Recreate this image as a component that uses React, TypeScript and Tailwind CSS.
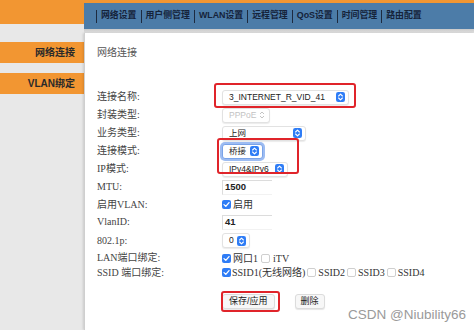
import React from "react";

const sans = { fontFamily: '"Liberation Sans", "Noto Sans CJK SC", sans-serif' };
const serif = { fontFamily: '"Liberation Serif", "Noto Sans CJK SC", serif' };

function Stepper({ gray = false }: { gray?: boolean }) {
  if (gray) {
    return (
      <svg width="8" height="10" viewBox="0 0 8 10" className="shrink-0">
        <path d="M2 4 L4 2 L6 4 M2 6 L4 8 L6 6" stroke="#c4c4c4" strokeWidth="1" fill="none" />
      </svg>
    );
  }
  return (
    <svg width="9" height="10" viewBox="0 0 9 10" className="shrink-0">
      <rect x="0" y="0" width="9" height="10" rx="2.2" fill="#2f7df6" />
      <path d="M2.6 4 L4.5 2.2 L6.4 4 M2.6 6 L4.5 7.8 L6.4 6" stroke="#fff" strokeWidth="1.1" fill="none" strokeLinecap="round" strokeLinejoin="round" />
    </svg>
  );
}

function Select({ text, w, gray = false, focus = false }: { text: string; w: string; gray?: boolean; focus?: boolean }) {
  return (
    <div
      className={`flex items-center justify-between h-[15px] pl-[6px] pr-[3px] rounded-[3px] bg-white text-[8.5px] ${w} ${
        focus ? "ring-2 ring-[#9dbcf2] border border-[#7aa3e8]" : "border border-[#e2e2e2] shadow-[0_1px_1px_rgba(0,0,0,0.08)]"
      } ${gray ? "text-[#c3c3c3]" : "text-[#222]"}`}
      style={sans}
    >
      <span className="leading-none">{text}</span>
      <Stepper gray={gray} />
    </div>
  );
}

function Input({ text }: { text: string }) {
  return (
    <div
      className="flex items-center h-[15px] w-[50px] pl-[2px] bg-white border-t border-l border-[#dcdcdc] border-b border-b-[#f2f2f2] text-[9.5px] font-bold text-[#222]"
      style={sans}
    >
      {text}
    </div>
  );
}

function Check({ on }: { on: boolean }) {
  if (on) {
    return (
      <svg width="9" height="9" viewBox="0 0 9 9" className="shrink-0">
        <rect x="0" y="0" width="9" height="9" rx="2" fill="#2f7df6" />
        <path d="M2 4.6 L3.8 6.4 L7 2.6" stroke="#fff" strokeWidth="1.3" fill="none" strokeLinecap="round" strokeLinejoin="round" />
      </svg>
    );
  }
  return <div className="w-[9px] h-[9px] shrink-0 rounded-[2px] border border-[#cfcfcf] bg-white" />;
}

function Row({ label, h, children }: { label: string; h: string; children?: React.ReactNode }) {
  return (
    <div className={`flex items-center ${h}`}>
      <div className="w-[125px] text-[10px] text-[#444] leading-none" style={serif}>
        {label}
      </div>
      <div className="flex items-center">{children}</div>
    </div>
  );
}

const navItems = ["网络设置", "用户侧管理", "WLAN设置", "远程管理", "QoS设置", "时间管理", "路由配置"];

export default function App() {
  return (
    <div className="relative w-[474px] h-[330px] overflow-hidden bg-[#e8e8e8] flex">
      {/* left column */}
      <div className="w-[84px] flex flex-col shrink-0">
        <div className="h-[24px] bg-[#f29632]" />
        <div className="h-[18px]" />
        <div className="h-[21px] bg-[#f29632] flex items-center justify-end pr-[9px] text-[10px] font-bold text-[#2a2a2a]" style={sans}>
          网络连接
        </div>
        <div className="h-[10px]" />
        <div className="h-[21px] bg-[#f29632] flex items-center justify-end pr-[9px] text-[10px] font-bold text-[#2a2a2a]" style={sans}>
          VLAN绑定
        </div>
      </div>

      {/* right column */}
      <div className="flex-1 flex flex-col">
        <div className="h-[3px] bg-[#f29632]" />
        <div className="h-[26px] bg-[#4c7ca8] flex items-center pl-[8px] text-[8.9px] font-bold text-[#15233a]" style={sans}>
          {navItems.map((n) => (
            <React.Fragment key={n}>
              <span className="w-px h-[13px] bg-[#1d2b40] mx-[4px]" />
              <span>{n}</span>
            </React.Fragment>
          ))}
        </div>
        <div className="h-[4px] bg-gradient-to-b from-[#c9c9c9] to-[#e2e2e2]" />
        <div className="relative flex-1 bg-white border-l border-[#cfcfcf] shadow-[-1px_0_2px_rgba(0,0,0,0.12)] pl-[12px] pt-[15px]">
          <div className="h-[13px] text-[10px] text-[#555] leading-none" style={serif}>
            网络连接
          </div>
          <div className="mt-[27px] flex flex-col">
            <Row label="连接名称:" h="h-[18px]">
              <Select text="3_INTERNET_R_VID_41" w="w-[127px]" />
            </Row>
            <Row label="封装类型:" h="h-[18px]">
              <Select text="PPPoE" w="w-[48px]" gray />
            </Row>
            <Row label="业务类型:" h="h-[18px]">
              <Select text="上网" w="w-[84px]" />
            </Row>
            <Row label="连接模式:" h="h-[18px]">
              <Select text="桥接" w="w-[41px]" focus />
            </Row>
            <Row label="IP模式:" h="h-[18px]">
              <Select text="IPv4&IPv6" w="w-[66px]" />
            </Row>
            <Row label="MTU:" h="h-[18px]">
              <Input text="1500" />
            </Row>
            <Row label="启用VLAN:" h="h-[17px]">
              <Check on />
              <span className="ml-[2px] text-[10px] text-[#333]" style={serif}>启用</span>
            </Row>
            <Row label="VlanID:" h="h-[18px]">
              <Input text="41" />
            </Row>
            <Row label="802.1p:" h="h-[19px]">
              <Select text="0" w="w-[28px]" />
            </Row>
            <Row label="LAN端口绑定:" h="h-[16px]">
              <Check on />
              <span className="ml-[2px] text-[10px] text-[#333]" style={serif}>网口1</span>
              <span className="ml-[3px]"><Check on={false} /></span>
              <span className="ml-[3px] text-[10px] text-[#333]" style={serif}>iTV</span>
            </Row>
            <Row label="SSID 端口绑定:" h="h-[13px]">
              <Check on />
              <span className="ml-[1px] text-[10px] text-[#333]" style={serif}>SSID1(无线网络)</span>
              <span className="ml-[2px]"><Check on={false} /></span>
              <span className="ml-[2px] text-[10px] text-[#333]" style={serif}>SSID2</span>
              <span className="ml-[2px]"><Check on={false} /></span>
              <span className="ml-[2px] text-[10px] text-[#333]" style={serif}>SSID3</span>
              <span className="ml-[2px]"><Check on={false} /></span>
              <span className="ml-[2px] text-[10px] text-[#333]" style={serif}>SSID4</span>
            </Row>
          </div>
          <div className="mt-[15px] ml-[125px] flex items-center gap-[20px]">
            <div className="h-[15px] px-[6px] flex items-center rounded-[3px] bg-[#f7f7f7] border border-[#dcdcdc] shadow-[0_1px_1px_rgba(0,0,0,0.1)] text-[9px] text-[#222]" style={sans}>
              保存/应用
            </div>
            <div className="h-[15px] px-[5px] flex items-center rounded-[3px] bg-[#f7f7f7] border border-[#dcdcdc] shadow-[0_1px_1px_rgba(0,0,0,0.1)] text-[9px] text-[#222]" style={sans}>
              删除
            </div>
          </div>

          {/* red annotation boxes */}
          <div className="absolute left-[129px] top-[50px] w-[142px] h-[25px] border-2 border-[#e0242a] rounded-[3px]" />
          <div className="absolute left-[132px] top-[105px] w-[82px] h-[36px] border-2 border-[#e0242a] rounded-[3px]" />
          <div className="absolute left-[136px] top-[258px] w-[59px] h-[21px] border-2 border-[#e0242a] rounded-[3px]" />

          {/* watermark */}
          <div className="absolute left-[263px] top-[275px] text-[13.5px] text-[#9a9a9a] leading-none" style={sans}>
            CSDN @Niubility66
          </div>
        </div>
      </div>
    </div>
  );
}
